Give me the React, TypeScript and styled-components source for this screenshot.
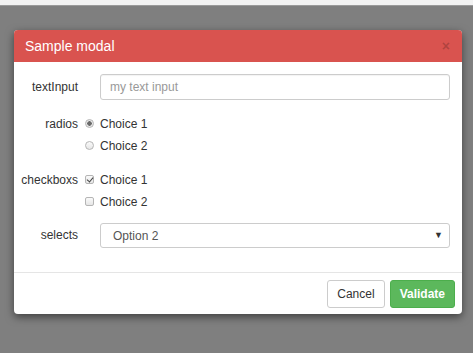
import styled, { createGlobalStyle, css } from "styled-components";

const GlobalStyle = createGlobalStyle`
  html, body {
    margin: 0;
    padding: 0;
    height: 100%;
    background: #808080;
    font-family: "Liberation Sans", Arial, sans-serif;
    color: #333;
  }
  * { box-sizing: border-box; }
`;

const TopStrip = styled.div`
  height: 6px;
  background: #f2f2f2;
  border-bottom: 1px solid #9a9a9a;
`;

const Overlay = styled.div`
  height: 347px;
  background: #7f7f7f;
  padding: 24px 11px 0 14px;
`;

const Modal = styled.div`
  width: 448px;
  background: #fff;
  border-radius: 4px;
  overflow: hidden;
  box-shadow: 0 3px 9px rgba(0, 0, 0, 0.5);
`;

const Header = styled.div`
  height: 32px;
  background: #d9534f;
  display: flex;
  align-items: center;
  justify-content: space-between;
  padding: 0 12px 0 11px;
`;

const Title = styled.h4`
  margin: 0;
  font-size: 14px;
  font-weight: normal;
  color: #fff;
`;

const Close = styled.button`
  border: 0;
  background: none;
  padding: 0;
  font-size: 14px;
  font-weight: bold;
  line-height: 1;
  color: rgba(0, 0, 0, 0.2);
  cursor: pointer;
`;

const Body = styled.div`
  padding: 12px 12px 24px 0;
  display: flex;
  flex-direction: column;
`;

const Group = styled.div<{ $mt?: number }>`
  display: grid;
  grid-template-columns: 64px 1fr;
  column-gap: 22px;
  margin-top: ${(p) => p.$mt ?? 0}px;
`;

const Label = styled.label<{ $h: number }>`
  font-size: 12px;
  text-align: right;
  line-height: ${(p) => p.$h}px;
  white-space: nowrap;
  color: #333;
`;

const TextInput = styled.input`
  height: 26px;
  width: 100%;
  border: 1px solid #ccc;
  border-radius: 3px;
  padding: 0 9px;
  font-family: inherit;
  font-size: 12px;
  color: #555;
  box-shadow: inset 0 1px 1px rgba(0, 0, 0, 0.05);
  &::placeholder { color: #999; }
`;

const Options = styled.div`
  display: flex;
  flex-direction: column;
`;

const Option = styled.label`
  position: relative;
  height: 22px;
  display: flex;
  align-items: center;
  font-size: 12px;
  color: #333;
`;

const markBase = css`
  appearance: none;
  position: absolute;
  left: -15px;
  top: 50%;
  width: 9px;
  height: 9px;
  margin: -5px 0 0;
  border: 1px solid #b5b5b5;
  background: linear-gradient(#fafafa, #e6e6e6);
`;

const Radio = styled.input.attrs({ type: "radio" })`
  ${markBase}
  border-radius: 50%;
  &:checked {
    background: radial-gradient(circle, #6a6a6a 0 2px, #e8e8e8 2.5px);
  }
`;

const Check = styled.input.attrs({ type: "checkbox" })`
  ${markBase}
  border-radius: 2px;
  &:checked::after {
    content: "";
    position: absolute;
    left: 2px;
    top: 0px;
    width: 3px;
    height: 5px;
    border: solid #444;
    border-width: 0 1.5px 1.5px 0;
    transform: rotate(40deg);
  }
`;

const SelectBox = styled.div`
  position: relative;
  height: 25px;
`;

const Select = styled.select`
  appearance: none;
  width: 100%;
  height: 100%;
  border: 1px solid #ccc;
  border-radius: 3px;
  background: #fff;
  padding: 0 12px;
  font-family: inherit;
  font-size: 12px;
  color: #555;
`;

const Caret = styled.span`
  position: absolute;
  right: 7px;
  top: 7px;
  font-size: 9px;
  color: #333;
  pointer-events: none;
`;

const Footer = styled.div`
  border-top: 1px solid #e5e5e5;
  display: flex;
  justify-content: flex-end;
  gap: 5px;
  padding: 7px 7px 6px;
`;

const Button = styled.button<{ $primary?: boolean }>`
  height: 28px;
  padding: 0 9px;
  border-radius: 3px;
  font-family: inherit;
  font-size: 12px;
  font-weight: ${(p) => (p.$primary ? "bold" : "normal")};
  border: 1px solid ${(p) => (p.$primary ? "#4cae4c" : "#ccc")};
  background: ${(p) => (p.$primary ? "#5cb85c" : "#fff")};
  color: ${(p) => (p.$primary ? "#fff" : "#333")};
`;

export default function App() {
  return (
    <>
      <GlobalStyle />
      <TopStrip />
      <Overlay>
        <Modal>
          <Header>
            <Title>Sample modal</Title>
            <Close>×</Close>
          </Header>
          <Body>
            <Group>
              <Label $h={26}>textInput</Label>
              <TextInput placeholder="my text input" />
            </Group>
            <Group $mt={13}>
              <Label $h={22}>radios</Label>
              <Options>
                <Option>
                  <Radio name="r" defaultChecked />
                  Choice 1
                </Option>
                <Option>
                  <Radio name="r" />
                  Choice 2
                </Option>
              </Options>
            </Group>
            <Group $mt={12}>
              <Label $h={22}>checkboxs</Label>
              <Options>
                <Option>
                  <Check defaultChecked />
                  Choice 1
                </Option>
                <Option>
                  <Check />
                  Choice 2
                </Option>
              </Options>
            </Group>
            <Group $mt={10}>
              <Label $h={25}>selects</Label>
              <SelectBox>
                <Select defaultValue="2">
                  <option value="1">Option 1</option>
                  <option value="2">Option 2</option>
                </Select>
                <Caret>▼</Caret>
              </SelectBox>
            </Group>
          </Body>
          <Footer>
            <Button>Cancel</Button>
            <Button $primary>Validate</Button>
          </Footer>
        </Modal>
      </Overlay>
    </>
  );
}
